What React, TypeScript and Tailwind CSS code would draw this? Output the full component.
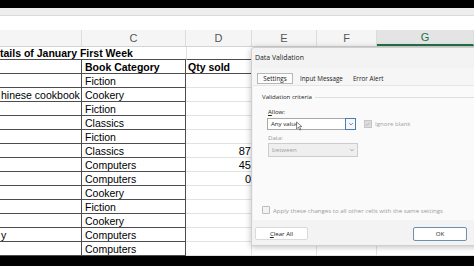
import React from 'react';

// column widths: B C D E F G
const COLS = [
  { key: 'B', w: 'w-[82px]' },
  { key: 'C', w: 'w-[104px]' },
  { key: 'D', w: 'w-[66px]' },
  { key: 'E', w: 'w-[65px]' },
  { key: 'F', w: 'w-[60px]' },
  { key: 'G', w: 'w-[97px]' },
];

const ROWS: { b: string; c: string; d: string }[] = [
  { b: '', c: 'Fiction', d: '' },
  { b: 'hinese cookbook', c: 'Cookery', d: '' },
  { b: '', c: 'Fiction', d: '' },
  { b: '', c: 'Classics', d: '' },
  { b: '', c: 'Fiction', d: '' },
  { b: '', c: 'Classics', d: '87' },
  { b: '', c: 'Computers', d: '45' },
  { b: '', c: 'Computers', d: '0' },
  { b: '', c: 'Cookery', d: '' },
  { b: '', c: 'Fiction', d: '' },
  { b: '', c: 'Cookery', d: '' },
  { b: 'y', c: 'Computers', d: '' },
  { b: '', c: 'Computers', d: '' },
];

const cellFont = "font-['Liberation_Sans',Arial,sans-serif] text-[10.5px] leading-[12px] text-black";
const uiFont = "font-['Open_Sans','Noto_Sans',sans-serif]";

function Chevron() {
  return (
    <svg viewBox="0 0 10 10" className="w-[6px] h-[6px]">
      <path d="M2 3.5 L5 6.5 L8 3.5" fill="none" stroke="#555" strokeWidth="1.2" />
    </svg>
  );
}

function Dialog() {
  return (
    <div className={`absolute left-[251px] top-[47px] w-[230px] h-[199px] bg-[#f3f3f3] border border-[#cfcfcf] rounded-tl-[3px] shadow-[0_1px_6px_rgba(0,0,0,0.25)] flex flex-col ${uiFont} text-[6.1px] text-[#222]`}>
      <div className="h-[20px] flex items-center pl-[3px] text-[6.9px]">Data Validation</div>
      {/* tabs */}
      <div className="h-[17px] flex items-end pl-[5px] pb-[1px] bg-[#f6f6f6]">
        <div className="w-[36px] h-[11px] border border-[#b8b8b8] bg-[#fcfcfc] flex items-center justify-center text-[6.3px]">Settings</div>
        <div className="h-[11px] flex items-center pl-[7px] pr-[10px] text-[6.3px]">Input Message</div>
        <div className="h-[11px] flex items-center text-[6.3px]">Error Alert</div>
      </div>
      {/* settings panel */}
      <div className="relative mx-[1px] h-[135px] bg-[#fafafa] border-t border-[#e6e6e6] flex flex-col">
        <div className="flex items-center mt-[7px] pl-[9px] h-[8px]">
          <span>Validation criteria</span>
          <div className="flex-1 h-px bg-[#dedede] ml-[3px]" />
        </div>
        <div className="pl-[15px] mt-[7px] h-[8px] flex items-center">
          <span><u>A</u>llow:</span>
        </div>
        <div className="flex items-center pl-[14px] mt-[2px]">
          <div className="relative w-[89px] h-[12px] bg-white border border-[#a9a9a9] flex items-center pl-[3px]">
            <span>Any value</span>
            <svg viewBox="0 0 12 16" className="absolute left-[28px] top-[2px] w-[7px] h-[10px]">
              <path d="M1 1 L1 13 L4 10 L6.5 15 L8.5 14 L6 9 L10 9 Z" fill="white" stroke="#333" strokeWidth="1" />
            </svg>
            <div className="absolute right-[-1px] top-[-1px] w-[11px] h-[12px] border border-[#4a7fb4] bg-[#f4f8fc] flex items-center justify-center">
              <Chevron />
            </div>
          </div>
          <div className="ml-[8px] w-[8px] h-[8px] border border-[#c6c6c6] bg-[#dcdcdc] flex items-center justify-center">
            <svg viewBox="0 0 10 10" className="w-[6px] h-[6px]">
              <path d="M2 5 L4 7.2 L8 2.8" fill="none" stroke="#b0b0b0" strokeWidth="1.3" />
            </svg>
          </div>
          <span className="ml-[3px] text-[#a3a3a3]">Ignore blank</span>
        </div>
        <div className="pl-[15px] mt-[4px] h-[8px] flex items-center text-[#9a9a9a]">Data:</div>
        <div className="pl-[15px] mt-[1px]">
          <div className="relative w-[90px] h-[14px] bg-[#efefef] border border-[#cdcdcd] flex items-center pl-[3px] text-[#9d9d9d]">
            <span>between</span>
            <div className="absolute right-[1px] top-[1px] w-[9px] h-[10px] flex items-center justify-center opacity-60">
              <Chevron />
            </div>
          </div>
        </div>
        <div className="flex-1" />
        <div className="flex items-center pl-[9px] mb-[5px]">
          <div className="w-[8px] h-[8px] border border-[#bdbdbd] bg-[#f3f3f3] rounded-[1px]" />
          <span className="ml-[3px] text-[#9b9b9b]">Apply these changes to all other cells with the same settings</span>
        </div>
      </div>
      {/* buttons */}
      <div className="flex items-start pt-[7px] pl-[3px]">
        <div className="w-[53px] h-[13px] bg-white border border-[#dadada] rounded-[2px] flex items-center justify-center">
          <span><u>C</u>lear All</span>
        </div>
        <div className="ml-[105px] w-[54px] h-[14px] bg-white border border-[#6f8fae] rounded-[2px] flex items-center justify-center">OK</div>
      </div>
    </div>
  );
}

export default function App() {
  return (
    <div className="relative w-[474px] h-[266px] overflow-hidden bg-white flex flex-col">
      <div className="h-[8px] bg-black shrink-0" />
      <div className="h-[8px] bg-[#eeeeee] border-b border-[#dadada] shrink-0" />
      <div className="h-[14px] bg-white shrink-0" />
      {/* column headers */}
      <div className="h-[17px] flex shrink-0 bg-[#f5f5f5] border-b border-[#d4d4d4] font-['Liberation_Sans',Arial,sans-serif] text-[11px] text-[#555]">
        {COLS.map((c) => (
          <div
            key={c.key}
            className={`${c.w} border-r border-[#dcdcdc] flex items-center justify-center ${
              c.key === 'G' ? 'bg-[#e4e4e4] text-[#217346] border-b-2 border-b-[#217346]' : ''
            }`}
          >
            {c.key === 'B' ? '' : c.key}
          </div>
        ))}
      </div>
      {/* title row */}
      <div className={`h-[13px] flex shrink-0 ${cellFont}`}>
        <div className="w-[186px] border-b border-[#4d4d4d] flex items-end font-bold whitespace-nowrap">
          tails of January First Week
        </div>
        <div className="w-[66px] border-b border-l border-[#4d4d4d] border-l-[#e2e2e2]" />
        <div className="flex-1" />
      </div>
      {/* header row */}
      <div className={`h-[14px] flex shrink-0 ${cellFont}`}>
        <div className="w-[82px] border-b border-r border-[#4d4d4d]" />
        <div className="w-[104px] border-b border-r border-[#4d4d4d] pl-[3px] flex items-center font-bold">Book Category</div>
        <div className="w-[66px] border-b border-[#4d4d4d] pl-[2px] flex items-center font-bold">Qty sold</div>
        <div className="flex-1" />
      </div>
      {ROWS.map((r, i) => (
        <div key={i} className={`h-[14px] flex shrink-0 ${cellFont}`}>
          <div className="w-[82px] border-b border-r border-[#4d4d4d] flex items-center pl-[1px] whitespace-nowrap overflow-hidden">{r.b}</div>
          <div className="w-[104px] border-b border-r border-[#4d4d4d] pl-[3px] flex items-center">{r.c}</div>
          <div className="w-[66px] border-b border-r border-[#e2e2e2] flex items-center justify-end text-[11px]">{r.d}</div>
          <div className="w-[65px] border-b border-r border-[#e2e2e2]" />
          <div className="w-[60px] border-b border-r border-[#e2e2e2]" />
          <div className="flex-1 border-b border-[#e2e2e2]" />
        </div>
      ))}
      <div className="flex-1 bg-black" />
      <Dialog />
    </div>
  );
}
